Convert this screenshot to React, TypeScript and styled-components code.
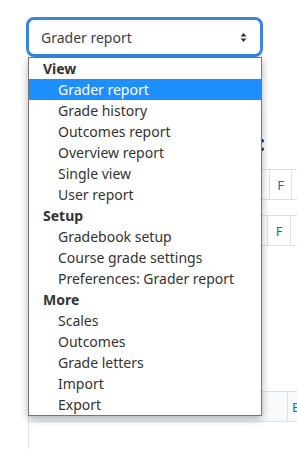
import { Fragment } from "react";
import styled, { createGlobalStyle } from "styled-components";

const GlobalStyle = createGlobalStyle`
  html, body {
    margin: 0;
    padding: 0;
    background: #fff;
  }
  body {
    font-family: "Noto Sans", "Open Sans", sans-serif;
    color: #1d2125;
  }
`;

const Page = styled.div`
  position: relative;
  width: 297px;
  height: 449px;
  overflow: hidden;
  padding-top: 17px;
  box-sizing: border-box;
`;

const SelectWrap = styled.div`
  position: relative;
  margin-left: 26px;
  width: 237px;
`;

const SelectBox = styled.div`
  box-sizing: border-box;
  height: 40px;
  border: 3px solid #3786e0;
  border-radius: 8px;
  display: flex;
  align-items: center;
  justify-content: space-between;
  padding: 0 13px 0 12px;
  font-size: 14px;
  color: #3b3f44;
  background: #fff;
`;

const Popup = styled.ul`
  position: absolute;
  top: 40px;
  left: 2px;
  width: 234px;
  box-sizing: border-box;
  margin: 0;
  padding: 0;
  list-style: none;
  background: #fff;
  border: 1px solid #767676;
  box-shadow: 0 3px 8px rgba(0, 0, 0, 0.3);
  z-index: 5;
`;

const Option = styled.li<{ $group?: boolean; $active?: boolean }>`
  height: 21px;
  line-height: 21px;
  font-size: 14px;
  white-space: nowrap;
  padding-left: ${(p) => (p.$group ? "14px" : "29px")};
  font-weight: ${(p) => (p.$group ? 700 : 400)};
  color: ${(p) => (p.$active ? "#fff" : "#333")};
  background: ${(p) => (p.$active ? "#1e8fff" : "transparent")};
`;

const Heading = styled.h2`
  margin: 70px 0 0 28px;
  width: 237px;
  height: 30px;
  text-align: right;
  font-size: 22px;
  font-weight: 700;
  line-height: 30px;
  color: #1d2125;
  overflow: hidden;
  white-space: nowrap;
`;

const Row = styled.div<{ $top: number; $cols: string; $bg?: string; $edge?: boolean }>`
  display: grid;
  grid-template-columns: ${(p) => p.$cols};
  margin-top: ${(p) => p.$top}px;
  margin-left: 28px;
  height: 29px;
  border-top: 1px solid #dee2e6;
  border-bottom: 1px solid #dee2e6;
  border-left: ${(p) => (p.$edge ? "1px solid #dee2e6" : "none")};
  background: ${(p) => p.$bg || "transparent"};
`;

const Cell = styled.div<{ $first?: boolean; $start?: boolean }>`
  border-left: ${(p) => (p.$first ? "none" : "1px solid #dee2e6")};
  display: flex;
  align-items: center;
  justify-content: ${(p) => (p.$start ? "flex-start" : "center")};
  padding-left: ${(p) => (p.$start ? "4px" : "0")};
  font-size: 13px;
  color: #0f6cbf;
  overflow: hidden;
`;

const Body = styled.div`
  margin-left: 28px;
  height: 60px;
  border-left: 1px solid #dee2e6;
`;

const Arrows = () => (
  <svg width="7" height="11" viewBox="0 0 7 11">
    <path d="M0.5 4.5 L3.5 1 L6.5 4.5 Z" fill="#333" />
    <path d="M0.5 6.5 L3.5 10 L6.5 6.5 Z" fill="#333" />
  </svg>
);

const groups: { label: string; items: string[] }[] = [
  {
    label: "View",
    items: [
      "Grader report",
      "Grade history",
      "Outcomes report",
      "Overview report",
      "Single view",
      "User report",
    ],
  },
  {
    label: "Setup",
    items: ["Gradebook setup", "Course grade settings", "Preferences: Grader report"],
  },
  {
    label: "More",
    items: ["Scales", "Outcomes", "Grade letters", "Import", "Export"],
  },
];

export default function App() {
  return (
    <>
      <GlobalStyle />
      <Page>
        <SelectWrap>
          <SelectBox>
            <span>Grader report</span>
            <Arrows />
          </SelectBox>
          <Popup>
            {groups.map((g) => (
              <Fragment key={g.label}>
                <Option $group>{g.label}</Option>
                {g.items.map((item) => (
                  <Option key={item} $active={item === "Grader report"}>
                    {item}
                  </Option>
                ))}
              </Fragment>
            ))}
          </Popup>
        </SelectWrap>
        <Heading>Grader report:</Heading>
        <Row $top={12} $cols="241px 22px 1fr">
          <Cell $first />
          <Cell>F</Cell>
          <Cell />
        </Row>
        <Row $top={15} $cols="239px 23px 1fr">
          <Cell $first />
          <Cell>F</Cell>
          <Cell />
        </Row>
        <Row $top={145} $cols="258px 1fr" $bg="#f8f9fa" $edge>
          <Cell $first />
          <Cell $start>E</Cell>
        </Row>
        <Body />
      </Page>
    </>
  );
}
